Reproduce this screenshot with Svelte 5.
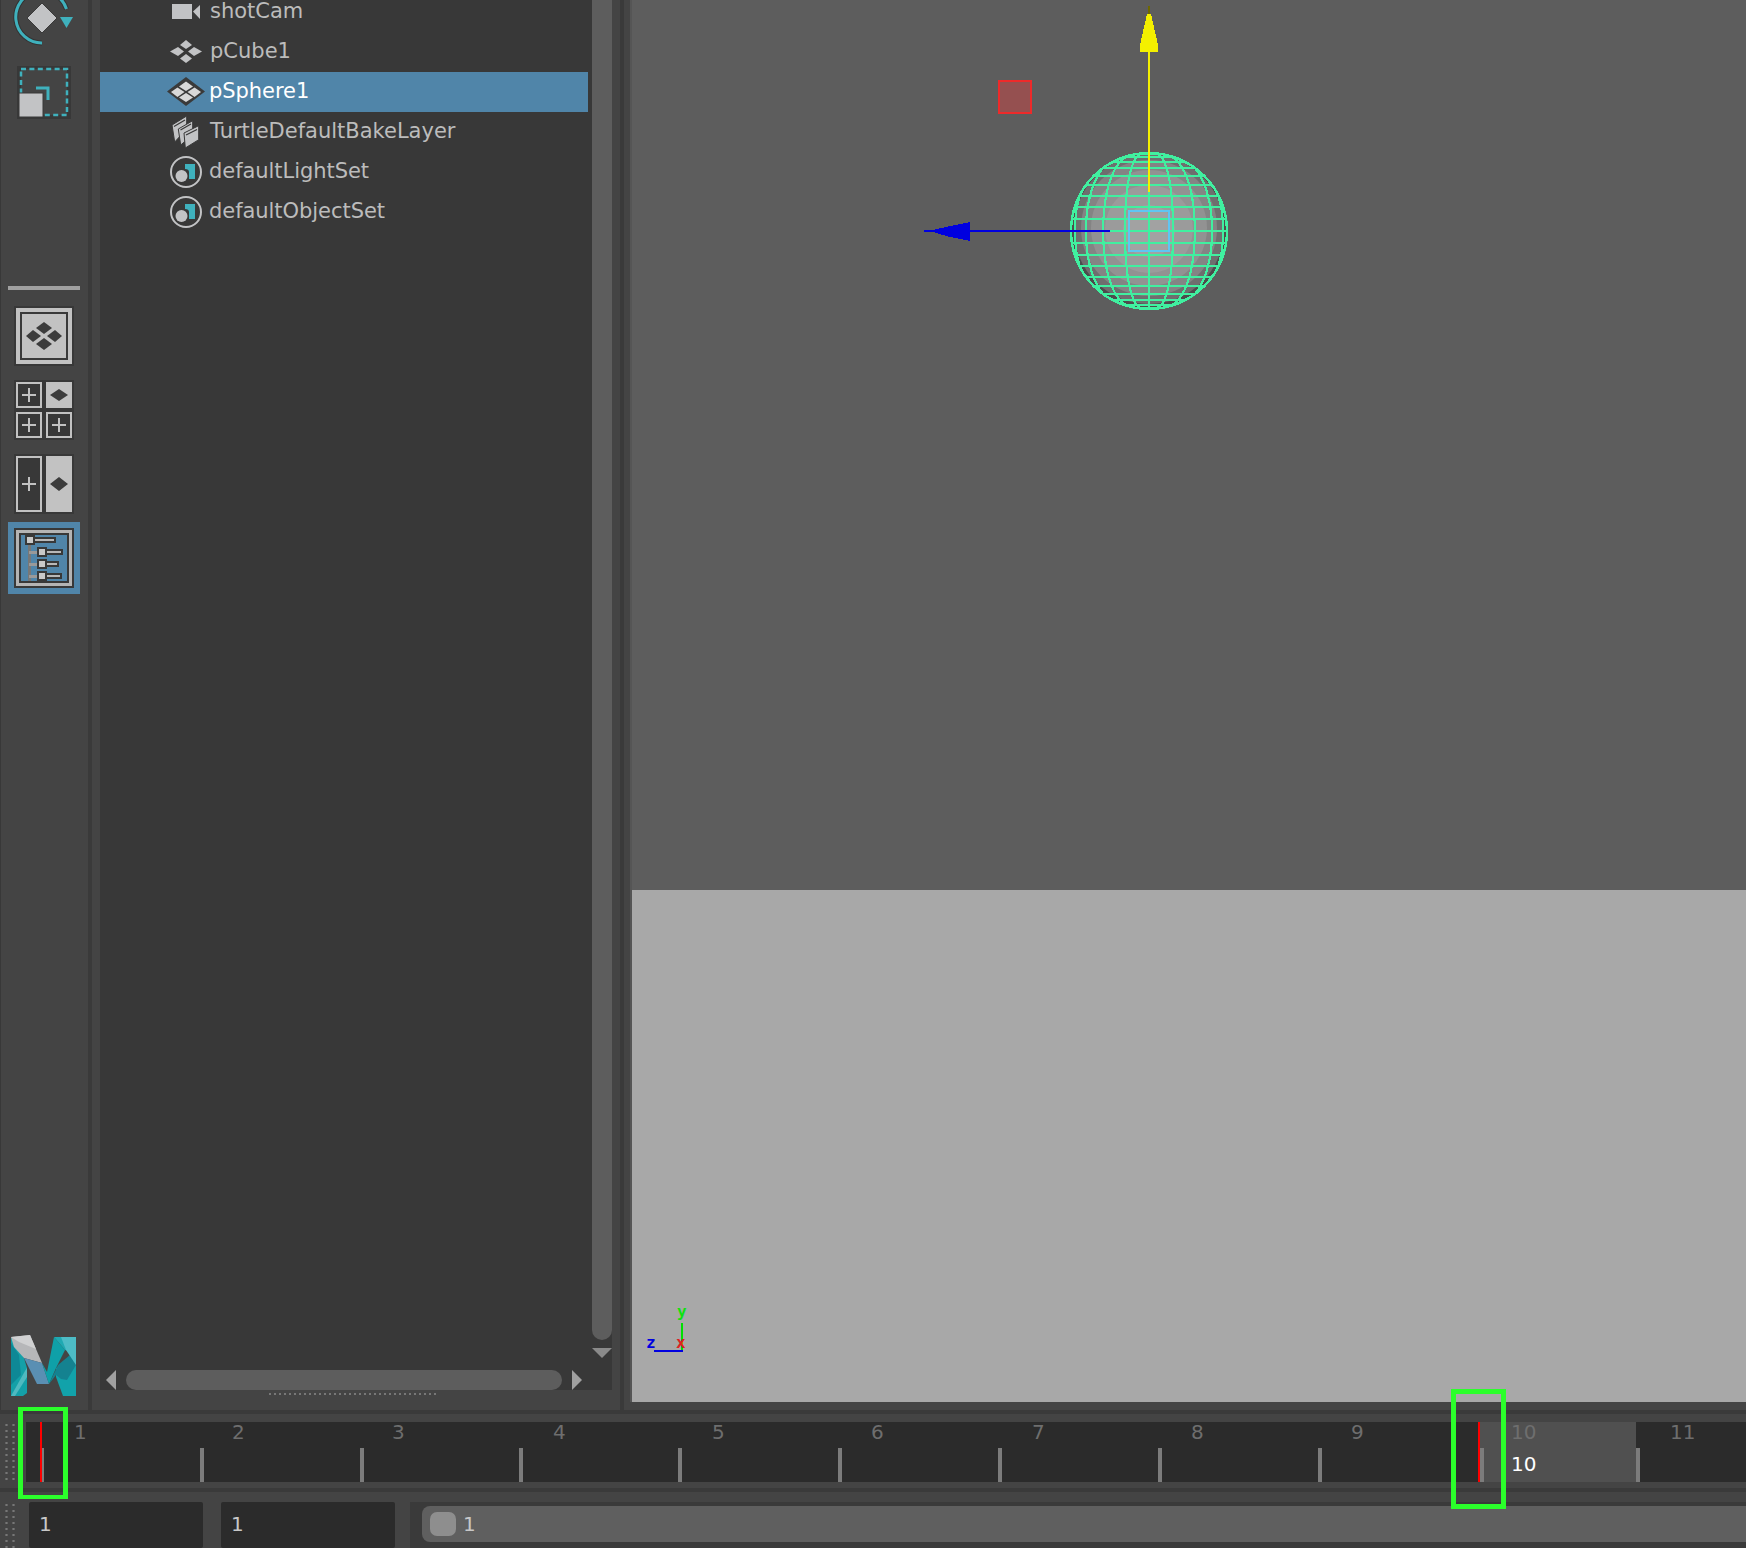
<script>
  const cx = 1149, cy = 231, R = 78;
  const rad = (d) => (d * Math.PI) / 180;
  const lats = [];
  for (let k = -9; k <= 9; k++) {
    const y = Math.round(cy + R * Math.sin(rad(k * 9)));
    const w = R * Math.cos(rad(k * 9));
    lats.push(`M${(cx - w).toFixed(1)} ${y}H${(cx + w).toFixed(1)}`);
  }
  const lons = [];
  for (let k = -5; k <= 5; k++) {
    let d = "";
    for (let a = -81; a <= 81; a += 3) {
      const x = cx + R * Math.pow(Math.cos(rad(a)), 0.6) * Math.sin(rad(k * 18));
      const y = cy + R * Math.sin(rad(a));
      d += `${a === -81 ? "M" : "L"}${x.toFixed(1)} ${y.toFixed(1)}`;
    }
    lons.push(d);
  }
  const wire = lats.join("") + lons.join("");

  const rows = [
    { name: "shotCam", icon: "cam" },
    { name: "pCube1", icon: "mesh" },
    { name: "pSphere1", icon: "mesh", sel: true },
    { name: "TurtleDefaultBakeLayer", icon: "layer" },
    { name: "defaultLightSet", icon: "set" },
    { name: "defaultObjectSet", icon: "set" }
  ];

  const ticks = [42, 200, 360, 519, 678, 838, 998, 1158, 1318, 1480, 1636];
  const labels = [74, 232, 392, 553, 712, 871, 1032, 1191, 1351, 1511, 1670];
</script>

<div class="app">
  <div class="main">
    <aside class="tools">
      <div class="tool-top">
        <svg class="ico-rotate" viewBox="0 0 88 66" width="88" height="66">
          <path d="M42 43A26 26 0 1 1 66.500 9" fill="none" stroke="#333" stroke-width="5" />
          <path d="M42 43A26 26 0 1 1 66.500 9" fill="none" stroke="#3fb1bd" stroke-width="3" />
          <path d="M42 3 57 18 42 33 27 18Z" fill="#c2c3c5" stroke="#3a3a3a" stroke-width="1" />
          <path d="M60 17H73L66.500 28Z" fill="#3fb1bd" />
        </svg>
        <svg class="ico-scale" viewBox="0 0 88 60" width="88" height="60">
          <rect x="19" y="1" width="50" height="50" fill="none" stroke="#383838" stroke-width="4" />
          <rect x="21" y="3" width="46" height="46" fill="none" stroke="#3fb1bd" stroke-width="2.500" stroke-dasharray="5 3.400" />
          <path d="M36 22H48V34" fill="none" stroke="#3fb1bd" stroke-width="3" />
          <rect x="19" y="27" width="24" height="24" fill="#c2c3c5" stroke="#383838" stroke-width="1" />
        </svg>
      </div>
      <div class="tool-sep"></div>
      <svg class="layout-ico" viewBox="0 0 60 60" width="60" height="60">
        <rect width="60" height="60" fill="#383838" />
        <rect x="2" y="2" width="56" height="56" fill="#c2c2c2" />
        <rect x="7" y="7" width="46" height="46" fill="none" stroke="#3a3a3a" stroke-width="2" />
        <g fill="#3c3c3c">
          <path d="M30 16 38 22 30 28 22 22Z" />
          <path d="M19 24 27 30 19 36 12 30Z" />
          <path d="M41 24 48 30 41 36 33 30Z" />
          <path d="M30 32 38 38 30 44 22 38Z" />
        </g>
      </svg>
      <svg class="layout-ico four" viewBox="0 0 60 60" width="60" height="60">
        <rect width="60" height="60" fill="#383838" />
        <g fill="none" stroke="#c2c2c2" stroke-width="2">
          <rect x="3" y="3" width="24" height="24" />
          <rect x="3" y="33" width="24" height="24" />
          <rect x="33" y="33" width="24" height="24" />
          <path d="M15 8V22M8 15H22M15 38V52M8 45H22M45 38V52M38 45H52" />
        </g>
        <rect x="32" y="2" width="26" height="26" fill="#c2c2c2" />
        <path d="M45 9 54 15 45 21 36 15Z" fill="#3c3c3c" />
      </svg>
      <svg class="layout-ico two" viewBox="0 0 60 60" width="60" height="60">
        <rect width="60" height="60" fill="#383838" />
        <rect x="3" y="3" width="24" height="54" fill="none" stroke="#c2c2c2" stroke-width="2" />
        <path d="M15 23V37M8 30H22" fill="none" stroke="#c2c2c2" stroke-width="2" />
        <rect x="32" y="2" width="26" height="56" fill="#c2c2c2" />
        <path d="M45 23 54 30 45 37 36 30Z" fill="#3c3c3c" />
      </svg>
      <div class="outliner-btn">
        <svg viewBox="0 0 60 60" width="60" height="60" shape-rendering="crispEdges">
          <rect width="60" height="60" fill="#383838" />
          <rect x="3.500" y="3.500" width="53" height="53" fill="none" stroke="#b4b4b4" stroke-width="3" />
          <rect x="7" y="7" width="46" height="46" fill="#5085a9" />
          <path d="M15 16V53" stroke="#777" stroke-width="3" />
          <path d="M15 24H24M15 36H24M15 48H24" stroke="#999" stroke-width="3" fill="none" />
          <g fill="#383838">
            <rect x="16" y="9" width="26" height="6" />
            <rect x="28" y="21" width="21" height="6" />
            <rect x="28" y="33" width="17" height="6" />
            <rect x="28" y="45" width="20" height="6" />
          </g>
          <g fill="#b8b8b8">
            <rect x="18" y="11" width="22" height="2" />
            <rect x="30" y="23" width="17" height="2" />
            <rect x="30" y="35" width="13" height="2" />
            <rect x="30" y="47" width="16" height="2" />
          </g>
          <g fill="#c8c8c8" stroke="#383838" stroke-width="2">
            <rect x="12" y="8" width="8" height="8" />
            <rect x="24" y="20" width="8" height="8" />
            <rect x="24" y="32" width="8" height="8" />
            <rect x="24" y="44" width="8" height="8" />
          </g>
        </svg>
      </div>
      <svg class="logo" viewBox="0 0 66 62" width="66" height="62">
        <path d="M0 2 13 23 16 33V58L12 61H0Z" fill="#14a0a8" />
        <path d="M0 8 8 20 10 40 0 50Z" fill="#0e8896" />
        <path d="M0 61 14 36 16 33V42L4 61Z" fill="#4fb9c0" />
        <path d="M0 2 19 0 31 28 13 23 3 12Z" fill="#b6b7b9" />
        <path d="M0 2 19 0 25 14 8 7Z" fill="#d0d1d2" />
        <path d="M13 23 31 28 38 49 26 49Z" fill="#5a8fb3" />
        <path d="M31 28 38 49 45 33 54 15 43 2 36 37Z" fill="#0fa0a8" />
        <path d="M45 33 65 20V61H52L45 42Z" fill="#12a2aa" />
        <path d="M38 49 47 30 65 15V30L56 45 50 44 45 40Z" fill="#148290" />
        <path d="M43 2H65V18L54 15Z" fill="#1fa9b2" />
        <path d="M50 2H65V30L55 15Z" fill="#4dbcc6" />
      </svg>
    </aside>
    <div class="split-a"></div>
    <section class="outliner">
      <div class="list-wrap">
        <ul class="list">
          {#each rows as r}
            <li class="row" class:sel={r.sel}>
              <span class="ri">
                {#if r.icon === "cam"}
                  <svg class="m8" viewBox="0 0 32 24" width="32" height="24">
                    <rect x="2" y="4" width="20" height="15" fill="#c2c3c5" />
                    <path d="M23 11.500 30 5V19H30Z" fill="#c2c3c5" />
                  </svg>
                {:else if r.icon === "mesh"}
                  <svg class="mesh" viewBox="0 0 36 30" width="36" height="30">
                    {#if r.sel}
                      <path d="M18 0 37 14.500 18 29 -1 14.500Z" fill="#3a3a3a" />
                      <g fill="#d8d8d8">
                        <path d="M18 4.500 25 9.500 18 14 11 9.500Z" />
                        <path d="M9.500 10.500 16.500 15 9.500 20 3 15Z" />
                        <path d="M26.500 10.500 33 15 26.500 20 19.500 15Z" />
                        <path d="M18 16 25 20.500 18 25 11 20.500Z" />
                      </g>
                    {:else}
                      <g fill="#c2c3c5">
                        <path d="M18 3 24 8 18 12 12 8Z" />
                        <path d="M10 10 16 14.500 10 19 2 14.500Z" />
                        <path d="M26 10 34 14.500 26 19 20 14.500Z" />
                        <path d="M18 17 24 21.500 18 26 12 21.500Z" />
                      </g>
                    {/if}
                  </svg>
                {:else if r.icon === "layer"}
                  <svg class="m8" viewBox="0 0 32 34" width="32" height="34">
                    <g fill="#c2c3c5" stroke="#383838" stroke-width="1">
                      <path d="M2 10 16.700 1V14L4.700 27Z" />
                      <path d="M8.300 14 22.700 5.700V20L10.700 30Z" />
                      <path d="M14 18 28.700 10.700V24.700L15.300 33Z" />
                    </g>
                    <path d="M4 11.500 15 5M10.500 15 21 9M16 20 27 14.500" stroke="#383838" stroke-width="1.200" fill="none" />
                  </svg>
                {:else}
                  <svg class="m7" viewBox="0 0 34 34" width="34" height="34">
                    <circle cx="17" cy="17" r="15" fill="none" stroke="#c2c3c5" stroke-width="2" />
                    <path d="M16 9H26V24H20V17Q20 14 16 14Z" fill="#3fb1bd" />
                    <circle cx="12.500" cy="21" r="6" fill="#c2c3c5" />
                  </svg>
                {/if}
              </span>
              <span class="rn" class:tight={r.icon === "set" || r.sel}>{r.name}</span>
            </li>
          {/each}
        </ul>
      </div>
      <div class="vbar">
        <div class="vthumb"></div>
        <svg class="varrow" viewBox="0 0 20 10" width="20" height="10"><path d="M0 0H20L10 10Z" fill="#8a8a8a" /></svg>
      </div>
      <div class="hbar">
        <svg viewBox="0 0 10 20" width="10" height="20"><path d="M10 0V20L0 10Z" fill="#a0a0a0" /></svg>
        <div class="hthumb"></div>
        <svg viewBox="0 0 10 20" width="10" height="20"><path d="M0 0V20L10 10Z" fill="#a0a0a0" /></svg>
      </div>
      <div class="hgrip"></div>
    </section>
    <div class="split-b"></div>
    <section class="view-col">
      <div class="viewport">
        <div class="vp-top"></div>
        <div class="vp-bottom"></div>
        <svg class="scene" viewBox="632 0 1114 890" width="1114" height="890">
          <defs>
            <clipPath id="ball"><circle cx={cx} cy={cy} r={R + 1} /></clipPath>
          </defs>
          <rect x="999" y="81" width="32" height="32" fill="#955050" stroke="#ee2a2a" stroke-width="2" shape-rendering="crispEdges" />
          <circle cx={cx} cy={cy} r="77" fill="#4c4c4c" />
          <circle cx={cx} cy={cy - 2} r="75" fill="#6e6e6e" />
          <circle cx={cx} cy={cy - 3} r="68" fill="#848484" />
          <circle cx={cx} cy={cy - 3} r="58" fill="#929292" />
          <circle cx={cx} cy={cy - 2} r="44" fill="#9b9b9b" />
          <circle cx={cx} cy={cy} r="26" fill="#a2a2a2" />
          <path d="M1082 271A78 78 0 0 0 1216 271" fill="none" stroke="#111" stroke-width="2" stroke-dasharray="3 9" shape-rendering="crispEdges" />
          <path d={wire} clip-path="url(#ball)" fill="none" stroke="#40f0a0" stroke-width="2.200" shape-rendering="crispEdges" />
          <circle cx={cx} cy={cy} r={R} fill="none" stroke="#40f0a0" stroke-width="2.500" shape-rendering="crispEdges" />
          <rect x="1129" y="211" width="40" height="40" fill="none" stroke="#5fc6f2" stroke-width="2" shape-rendering="crispEdges" />
          <path d="M1148.900 52V192" stroke="#f4f000" stroke-width="2" shape-rendering="crispEdges" />
          <path d="M1148 6H1150V14H1148Z" fill="#6e6800" shape-rendering="crispEdges" />
          <path d="M1147 14H1151L1158 45V52H1140V45Z" fill="#f4f000" shape-rendering="crispEdges" />
          <path d="M970 230.900H1110" stroke="#0000e0" stroke-width="2" shape-rendering="crispEdges" />
          <path d="M924 230H933L950 226 970 222V241L950 237 933 232H924Z" fill="#0000e0" shape-rendering="crispEdges" />
        </svg>
        <svg class="axes" viewBox="0 -12 56 66" width="56" height="66">
          <path d="M38 19V48" stroke="#00e000" stroke-width="2" shape-rendering="crispEdges" />
          <path d="M10 47H39" stroke="#0000e0" stroke-width="2" shape-rendering="crispEdges" />
          <text x="33" y="13" fill="#10e010">y</text>
          <text x="2" y="44" fill="#0000e0">z</text>
          <text x="32" y="44" fill="#e02020">x</text>
        </svg>
      </div>
    </section>
  </div>

  <div class="band-dark"></div>
  <div class="time-wrap">
    <div class="grip"></div>
    <div class="track">
      <div class="hl"></div>
      {#each ticks as t, i}
        <span class="tick" class:first={i === 0} style="left:{t - 26}px"></span>
        <span class="lab" style="left:{labels[i] - 26}px">{i + 1}</span>
      {/each}
      <span class="now now-a"></span>
      <span class="now now-b"></span>
      <span class="cur">10</span>
    </div>
  </div>
  <div class="gap-b"></div>
  <div class="band-dark"></div>
  <div class="gap-c"></div>
  <div class="range">
    <div class="grip g2"></div>
    <div class="field f1">1</div>
    <div class="field f2">1</div>
    <div class="slider-box">
      <div class="slider">
        <span class="swatch"></span>
        <span class="sv">1</span>
      </div>
    </div>
  </div>

  <div class="mark m1"></div>
  <div class="mark m2"></div>
</div>

<style>
  :global(body) { margin: 0; background: #444; }
  .app {
    position: relative;
    width: 1746px;
    height: 1548px;
    overflow: hidden;
    background: #444;
    font-family: "DejaVu Sans", "Liberation Sans", sans-serif;
    display: flex;
    flex-direction: column;
  }
  .main { display: flex; height: 1410px; flex: none; }
  .tools {
    width: 88px;
    box-sizing: border-box;
    flex: none;
    display: flex;
    flex-direction: column;
    border-left: 1px solid #383838;
    position: relative;
  }
  .tools > * { margin-left: -1px; }
  .tool-top { height: 286px; display: flex; flex-direction: column; }
  .ico-rotate { display: block; flex: none; }
  .ico-scale { display: block; flex: none; }
  .tool-sep { width: 72px; height: 4px; background: #a0a0a0; margin-left: 7px; margin-bottom: 16px; flex: none; }
  .layout-ico { display: block; margin-left: 13px; flex: none; }
  .four { margin-top: 14px; }
  .two { margin-top: 14px; }
  .outliner-btn {
    margin: 8px 0 0 7px;
    width: 72px;
    height: 72px;
    background: #5085a9;
    display: flex;
    align-items: center;
    justify-content: center;
    flex: none;
  }
  .outliner-btn svg { display: block; }
  .logo { position: absolute; left: 11px; top: 1335px; }
  .split-a { width: 4px; background: #3a3a3a; flex: none; margin-right: 8px; }
  .outliner {
    width: 512px;
    height: 1390px;
    background: #383838;
    flex: none;
    display: grid;
    grid-template-columns: 488px 4px 20px;
    grid-template-rows: 1370px 20px;
    position: relative;
  }
  .list-wrap { grid-column: 1; grid-row: 1; overflow: hidden; }
  .list { list-style: none; margin: -8px 0 0; padding: 0; }
  .row {
    height: 40px;
    display: flex;
    align-items: center;
    color: #bcbcbc;
    font-size: 21px;
  }
  .row.sel { background: #5085a9; color: #fff; }
  .ri { width: 116px; display: flex; justify-content: flex-end; align-items: center; margin-left: -6px; flex: none; }
  .ri svg { display: block; margin-right: 6px; overflow: visible; }
  .ri svg.m8 { margin-right: 8px; }
  .ri svg.m7 { margin-right: 7px; }
  .rn { white-space: nowrap; margin-top: -2px; }
  .rn.tight { margin-left: -1px; letter-spacing: -0.05px; }
  .vbar { grid-column: 3; grid-row: 1; display: flex; flex-direction: column; }
  .vthumb { height: 1340px; background: #5d5d5d; border-radius: 0 0 10px 10px; flex: none; }
  .varrow { display: block; margin-top: 8px; }
  .hbar {
    grid-column: 1 / 4;
    grid-row: 2;
    display: flex;
    align-items: center;
    padding-left: 6px;
    gap: 10px;
  }
  .hbar svg { display: block; flex: none; }
  .hthumb { width: 436px; height: 20px; border-radius: 10px; background: #5d5d5d; flex: none; }
  .hgrip {
    position: absolute;
    left: 169px;
    top: 1393px;
    width: 170px;
    height: 2px;
    background: repeating-linear-gradient(90deg, #777 0 2px, transparent 2px 5px);
  }
  .split-b { width: 8px; flex: none; }
  .view-col {
    flex: 1;
    display: flex;
    flex-direction: column;
    padding: 0 0 8px;
    position: relative;
    border-left: 4px solid #3a3a3a;
    min-width: 0;
  }
  .viewport {
    margin-left: 6px;
    flex: 1;
    display: flex;
    flex-direction: column;
    border-left: 2px solid #555;
    position: relative;
  }
  .vp-top { height: 890px; background: #5d5d5d; flex: none; }
  .vp-bottom { flex: 1; background: #a8a8a8; }
  .scene { position: absolute; left: 0; top: 0; display: block; }
  .axes { position: absolute; left: 12px; top: 1292px; display: block; }
  .axes text { font: bold 16px "DejaVu Sans Mono", monospace; }
  .band-dark { height: 4px; background: #3a3a3a; flex: none; }
  .time-wrap { height: 68px; display: flex; padding-top: 8px; box-sizing: border-box; flex: none; position: relative; }
  .grip {
    width: 26px;
    flex: none;
    height: 60px;
    position: relative;
  }
  .grip::before {
    content: "";
    position: absolute;
    left: 3px;
    top: 0;
    width: 14px;
    height: 100%;
    background: radial-gradient(circle, #777 1px, transparent 1.300px) 0 0 / 7px 6px;
  }
  .track {
    flex: 1;
    height: 60px;
    background: #2b2b2b;
    position: relative;
  }
  .hl { position: absolute; left: 1454px; width: 156px; top: 0; bottom: 0; background: #505050; }
  .tick { position: absolute; bottom: 0; height: 34px; width: 4px; background: #7c7c7c; }
  .tick.first { width: 2px; }
  .lab { position: absolute; top: -1px; line-height: 22px; font-size: 20px; color: #6e6e6e; }
  .now { position: absolute; width: 2px; background: #f00; top: 0; bottom: 0; }
  .now-a { left: 14px; }
  .now-b { left: 1452px; }
  .cur { position: absolute; left: 1485px; top: 30px; line-height: 24px; font-size: 20px; color: #fff; }
  .gap-b { height: 6px; flex: none; }
  .gap-c { height: 10px; flex: none; }
  .range { flex: 1; display: flex; position: relative; background: #444; }
  .grip.g2 { height: 46px; margin-right: 3px; }
  .field {
    width: 174px;
    height: 46px;
    background: #2b2b2b;
    color: #c8c8c8;
    font-size: 20px;
    line-height: 44px;
    box-sizing: border-box;
    padding-left: 10px;
    border-radius: 2px;
    flex: none;
  }
  .f2 { margin-left: 18px; }
  .slider-box { flex: 1; margin-left: 15px; background: #3a3a3a; padding: 4px 0 0 12px; }
  .slider {
    height: 36px;
    background: #5f5f5f;
    border-radius: 8px 0 0 8px;
    display: flex;
    align-items: center;
    box-sizing: border-box;
    padding-left: 8px;
  }
  .swatch { width: 26px; height: 24px; border-radius: 7px; background: #8e8e8e; flex: none; }
  .sv { color: #c8c8c8; font-size: 20px; margin-left: 7px; }
  .mark { position: absolute; border: solid #2bff2b; box-sizing: border-box; pointer-events: none; }
  .m1 { left: 18px; top: 1407px; width: 50px; height: 92px; border-width: 4px 5px; }
  .m2 { left: 1451px; top: 1389px; width: 55px; height: 120px; border-width: 5px; }
</style>
